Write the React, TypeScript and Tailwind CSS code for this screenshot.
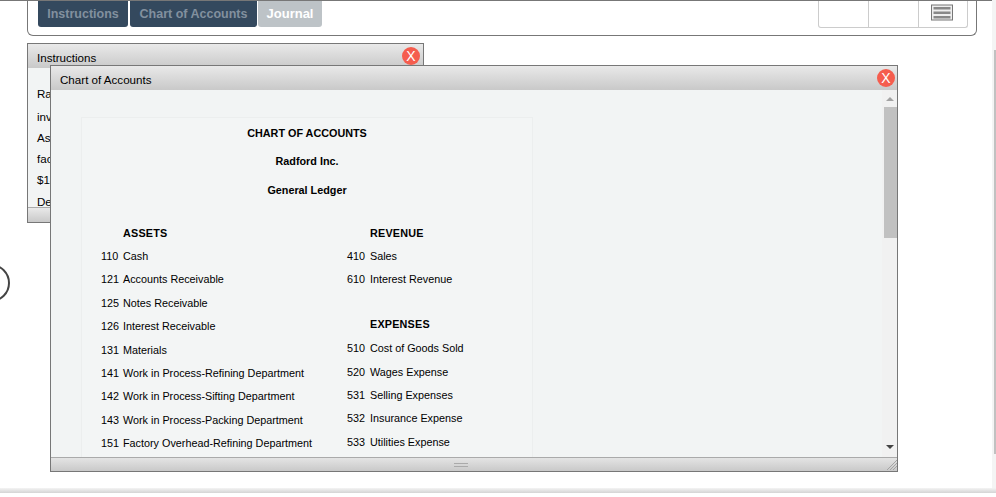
import React from "react";

const assets = [
  ["110", "Cash"],
  ["121", "Accounts Receivable"],
  ["125", "Notes Receivable"],
  ["126", "Interest Receivable"],
  ["131", "Materials"],
  ["141", "Work in Process-Refining Department"],
  ["142", "Work in Process-Sifting Department"],
  ["143", "Work in Process-Packing Department"],
  ["151", "Factory Overhead-Refining Department"],
];

const revenue = [
  ["410", "Sales"],
  ["610", "Interest Revenue"],
];

const expenses = [
  ["510", "Cost of Goods Sold"],
  ["520", "Wages Expense"],
  ["531", "Selling Expenses"],
  ["532", "Insurance Expense"],
  ["533", "Utilities Expense"],
];

const instructionLines = [
  ["Radford", "h-[23px]"],
  ["inventory", "h-[21px]"],
  ["Assume", "h-[21px]"],
  ["factory", "h-[21px]"],
  ["$14", "h-[22px]"],
  ["December", "h-[21px]"],
];

const Heading = ({ children, right }: { children: React.ReactNode; right?: boolean }) => (
  <div
    className={`flex h-[22.4px] items-center text-[10.8px] font-bold tracking-[0.2px] text-black ${
      right ? "pl-[42px]" : "pl-[41px]"
    }`}
  >
    {children}
  </div>
);

const Row = ({ code, name, right }: { code: string; name: string; right?: boolean }) => (
  <div className="flex h-[23.4px] items-center text-[10.8px] text-black">
    <span className={`pl-[19px] ${right ? "w-[42px]" : "w-[41px]"}`}>{code}</span>
    <span className="whitespace-nowrap">{name}</span>
  </div>
);

const CloseButton = () => (
  <div className="flex h-[18px] w-[18px] items-center justify-center rounded-full bg-[#f55d4e] text-[14px] text-white">
    X
  </div>
);

const App = () => {
  return (
    <div className="relative h-[497px] w-[996px] overflow-hidden bg-white font-['Liberation_Sans',Arial,sans-serif]">
      <div className="h-[492px] border-t border-[#777]">
        <div className="ml-[27px] flex h-[35px] w-[950px] items-start justify-between rounded-b-[6px] border border-t-0 border-[#777] pl-[10px] pr-[8px]">
          <div className="flex gap-px">
            <div className="flex h-[26px] w-[90px] items-center justify-center rounded-b-[3px] bg-[#34495e] text-[12.5px] font-bold text-[#82909e]">
              Instructions
            </div>
            <div className="ml-px flex h-[26px] w-[127px] items-center justify-center rounded-b-[3px] bg-[#34495e] text-[12.5px] font-bold text-[#82909e]">
              Chart of Accounts
            </div>
            <div className="flex h-[26px] w-[64px] items-center justify-center rounded-b-[3px] bg-[#bdc3c7] text-[13px] font-bold text-white">
              Journal
            </div>
          </div>
          <div className="flex h-[27px] w-[150px] rounded-b-[3px] border border-t-0 border-[#ccc]">
            <div className="w-[50px] border-r border-[#ccc]" />
            <div className="w-[50px] border-r border-[#ccc]" />
            <div className="flex flex-1 justify-center pt-[3px] pr-[2px]">
              <svg width="23" height="17" viewBox="0 0 23 17">
                <rect x="0.5" y="1" width="21" height="15" fill="#eee" stroke="#777" />
                <rect x="2.5" y="3" width="17" height="2.5" fill="#888" />
                <rect x="2.5" y="7.5" width="17" height="2.5" fill="#888" />
                <rect x="2.5" y="12" width="17" height="2.5" fill="#888" />
              </svg>
            </div>
          </div>
        </div>
      </div>

      {/* page scrollbar */}
      <div className="absolute right-0 top-0 h-[489px] w-[4px] bg-[#f4f4f4]">
        <div className="ml-[2px] mt-[50px] h-[404px] w-[2px] bg-[#c1c1c1]" />
      </div>
      <div className="absolute left-0 top-[488px] h-[5px] w-[996px] bg-gradient-to-b from-[#f4f4f4] to-[#d4d4d4]" />

      {/* circle peeking in from the left */}
      <div className="absolute left-[-28px] top-[264px] h-[38px] w-[38px] rounded-full border-2 border-[#444]" />

      {/* Instructions window */}
      <div className="absolute left-[27px] top-[43px] flex h-[180px] w-[397px] flex-col border border-[#777] bg-[#f2f4f4]">
        <div className="flex h-[24px] items-center justify-between bg-gradient-to-b from-[#e9e9e9] to-[#c9c9c9] pl-[9px] pr-[3px] text-[11.6px] text-black">
          <span className="pt-[4px]">Instructions</span>
          <CloseButton />
        </div>
        <div className="flex-1 overflow-hidden pl-[9px] pt-[17px] text-[11.6px] text-black">
          {instructionLines.map(([text, height]) => (
            <div key={text} className={height}>
              {text}
            </div>
          ))}
        </div>
        <div className="h-[15px] border-t border-[#aaa] bg-gradient-to-b from-[#e9e9e9] to-[#c9c9c9]" />
      </div>

      {/* Chart of Accounts window */}
      <div className="absolute left-[50px] top-[65px] flex h-[407px] w-[848px] flex-col border border-[#777] bg-[#f2f4f4]">
        <div className="flex h-[24px] shrink-0 items-center justify-between bg-gradient-to-b from-[#e9e9e9] to-[#c9c9c9] pl-[9px] pr-[2px] text-[11.6px] text-black">
          <span className="pt-[4px]">Chart of Accounts</span>
          <CloseButton />
        </div>
        <div className="flex min-h-0 flex-1">
          <div className="min-w-0 flex-1 overflow-hidden pl-[30px] pt-[27px]">
            <div className="h-[500px] w-[452px] border border-[#eceeee] bg-[#f3f5f5]">
              <div className="flex h-[28px] items-center justify-center pt-[2px] text-[10.8px] font-bold text-black">
                CHART OF ACCOUNTS
              </div>
              <div className="flex h-[28px] items-center justify-center pt-[3px] text-[10.8px] font-bold text-black">
                Radford Inc.
              </div>
              <div className="flex h-[29px] items-center justify-center pt-[4px] text-[10.8px] font-bold text-black">
                General Ledger
              </div>
              <div className="flex pt-[19px]">
                <div className="w-[246px]">
                  <Heading>ASSETS</Heading>
                  {assets.map(([code, name]) => (
                    <Row key={code} code={code} name={name} />
                  ))}
                </div>
                <div>
                  <Heading right>REVENUE</Heading>
                  {revenue.map(([code, name]) => (
                    <Row key={code} code={code} name={name} right />
                  ))}
                  <div className="mb-[1px] mt-[22px]">
                    <Heading right>EXPENSES</Heading>
                  </div>
                  {expenses.map(([code, name]) => (
                    <Row key={code} code={code} name={name} right />
                  ))}
                </div>
              </div>
            </div>
          </div>
          <div className="flex w-[15px] shrink-0 flex-col bg-[#f1f1f1]">
            <div className="flex h-[17px] items-center justify-center">
              <div className="h-0 w-0 border-x-[4px] border-b-[4px] border-x-transparent border-b-[#a3a3a3]" />
            </div>
            <div className="ml-[2px] h-[131px] bg-[#c1c1c1]" />
            <div className="flex flex-1 items-end justify-center pb-[8px]">
              <div className="h-0 w-0 border-x-[4px] border-t-[4px] border-x-transparent border-t-[#444]" />
            </div>
          </div>
        </div>
        <div className="flex h-[14px] shrink-0 items-center border-t border-[#aaa] bg-gradient-to-b from-[#e4e4e4] to-[#c9c9c9]">
          <div className="ml-[403px] h-[4px] w-[14px] border-y border-[#aaa]" />
          <svg className="ml-auto" width="11" height="11" viewBox="0 0 11 11">
            <path d="M1 11L11 1M4 11L11 4M7 11L11 7" stroke="#a4a4a4" fill="none" />
          </svg>
        </div>
      </div>
    </div>
  );
};

export default App;
